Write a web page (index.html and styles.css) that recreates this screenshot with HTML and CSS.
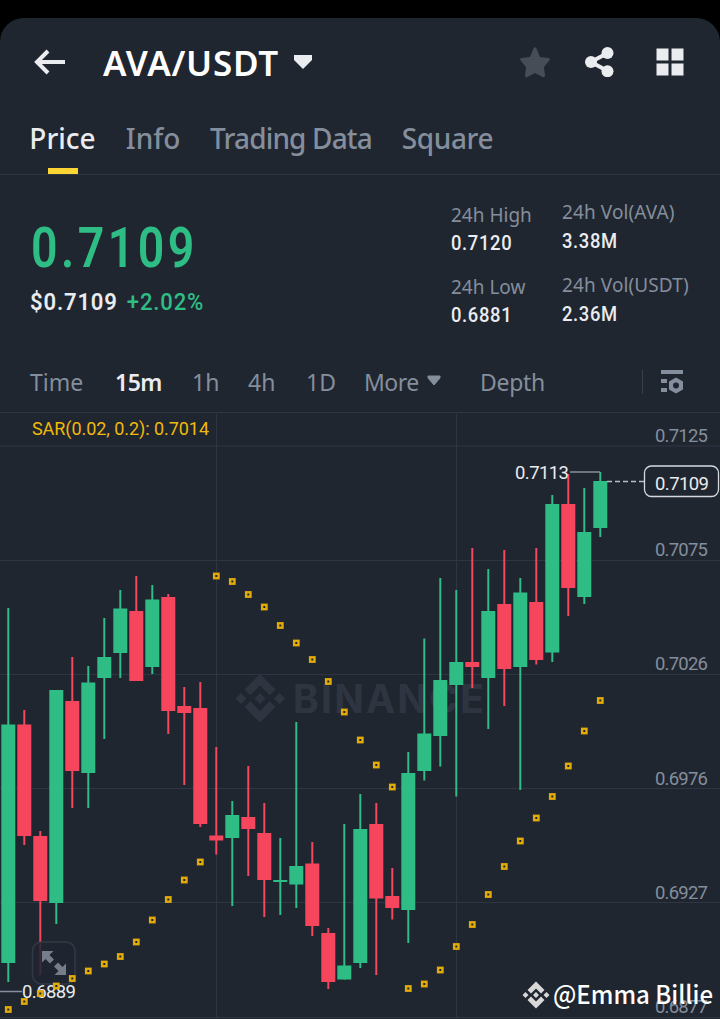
FILE: index.html
```html
<!DOCTYPE html>
<html lang="en">
<head>
<meta charset="utf-8" />
<title>AVA/USDT</title>
<meta name="viewport" content="width=device-width, initial-scale=1.0" />
<link rel="stylesheet" href="styles.css">
</head>
<body>

<div class="app">
  <header class="header">
    <svg class="back" width="32" height="26" viewBox="0 0 32 26"><path d="M14 2 3 13l11 11M3 13h28" fill="none" stroke="#eaecef" stroke-width="4"/></svg>
    <h1 class="pair">AVA/USDT</h1>
    <svg class="caret" width="18" height="14" viewBox="0 0 18 14"><path d="M0 0h18v5l-9 9-9-9z" fill="#eaecef"/></svg>
    <div class="actions">
      <svg width="30" height="31" viewBox="0 0 30 31"><path d="M13.5 1.5Q15 -.8 16.5 1.500L20 10l8.500 1q2.200.8.700 2.700L24 20l1 9q-.5 2-2.500 1L15 26l-7.500 4q-2 1-2.500-1l1-9-5.200-6.300Q-.7 11.800 1.500 11L10 10z" fill="#474d57"/></svg>
      <svg width="30" height="30" viewBox="0 0 30 30" fill="#eaecef"><path d="M6 15 22.500 6M6 15l16.500 9" stroke="#eaecef" stroke-width="4"/><circle cx="6" cy="15" r="6"/><circle cx="22.500" cy="6" r="6"/><circle cx="22.500" cy="24.200" r="6"/></svg>
      <svg width="28" height="28" viewBox="0 0 28 28" fill="#eaecef"><path d="M.5.5h12v12H.5zM15.500.5h12v12h-12zM.5 15.500h12v12H.5zM15.500 15.500h12v12h-12z"/></svg>
    </div>
  </header>

  <nav class="tabs">
    <a class="tab active">Price</a>
    <a class="tab info">Info</a>
    <a class="tab trading">Trading Data</a>
    <a class="tab square">Square</a>
  </nav>

  <section class="ticker">
    <div class="last">
      <div class="price">0.7109</div>
      <div class="fiat">$0.7109 <span class="up">+2.02%</span></div>
    </div>
    <div class="stats">
      <dl><dt>24h High</dt><dd>0.7120</dd></dl>
      <dl><dt>24h Low</dt><dd>0.6881</dd></dl>
    </div>
    <div class="stats volume">
      <dl><dt>24h Vol(AVA)</dt><dd>3.38M</dd></dl>
      <dl><dt>24h Vol(USDT)</dt><dd>2.36M</dd></dl>
    </div>
  </section>

  <nav class="intervals">
    <a class="time">Time</a>
    <a class="m15 on">15m</a>
    <a class="h1">1h</a>
    <a class="h4">4h</a>
    <a class="d1">1D</a>
    <a class="more">More <svg width="14" height="11" viewBox="0 0 14 11"><path d="M1 1h12v2L7 10 1 3z" fill="#848e9c" stroke="#848e9c"/></svg></a>
    <a class="depth">Depth</a>
    <svg class="settings" width="24" height="24" viewBox="0 0 24 24" fill="#848e9c"><path d="M1 0h22v4H1zM1 9h6v4H1zM1 18h6v4H1z"/><path fill-rule="evenodd" d="m16 7.500 7 4v8l-7 4-7-4v-8zM16 12.500a3 3 0 1 0 0 6 3 3 0 0 0 0-6z"/></svg>
  </nav>

  <svg class="chart" width="720" height="607" viewBox="0 412 720 607">
    <path class="grid" d="M0 412.500h720M0 446h720M0 560.500h720M0 674.500h720M0 788.500h720M0 902.500h720M0 1017.500h720M216.500 414v603M456.500 414v603"/>
    <g class="watermark">
      <path d="m260 674 15.500 15.500-5.800 5.800-9.700-9.700-9.700 9.700-5.800-5.800zM260 722.500 244.500 707l5.800-5.800 9.700 9.700 9.700-9.700 5.800 5.800zM241 693l5.500 5.500-5.500 5.500-5.500-5.500zM279.500 693l5.500 5.500-5.500 5.500-5.500-5.500zM260 693l5.500 5.500-5.500 5.500-5.500-5.500z"/>
      <text x="293" y="713" textLength="191">BINANCE</text>
    </g>
    <g class="axis">
      <text x="655" y="442" textLength="53">0.7125</text>
      <text x="655" y="556" textLength="53">0.7075</text>
      <text x="655" y="670" textLength="53">0.7026</text>
      <text x="655" y="785" textLength="53">0.6976</text>
      <text x="655" y="899" textLength="53">0.6927</text>
      <text x="655" y="1013" textLength="53">0.6877</text>
    </g>
    <text class="sar-label" x="32" y="435" textLength="177">SAR(0.02, 0.2): 0.7014</text>
    <g id="candles"></g>

    <path d="M570 472h30M0 991.500h22" stroke="#848e9c" stroke-width="1.700"/>
    <text class="mark" x="515" y="479" textLength="54">0.7113</text>
    <path d="M607 481.500h38" stroke="#b7bdc6" stroke-width="1.300" stroke-dasharray="5 3"/>
    <rect x="644.500" y="466" width="74" height="30.500" rx="7" fill="#202630" stroke="#d5d9df" stroke-width="1.300"/>
    <text class="mark" x="655" y="490" textLength="54">0.7109</text>

    <g class="expand">
      <rect x="32.500" y="942" width="42.500" height="42" rx="9"/>
      <path d="M42 951h11.500l-4 4 4.500 4.500-4 4-4.500-4.500-3.500 3.500zM66 975H54.500l4-4-4.500-4.500 4-4 4.500 4.500 3.500-3.500z"/>
    </g>
    <text class="mark" x="22" y="998" textLength="54">0.6889</text>
    <g id="sar"></g>

    <g class="credit">
      <path d="m536 981.500 8.500 8.500-3.500 3.500-5-5-5 5-3.500-3.500zM536 1008.500l-8.500-8.500 3.500-3.500 5 5 5-5 3.500 3.500zM525.500 992l3 3-3 3-3-3zM546.500 992l3 3-3 3-3-3zM536 992l3 3-3 3-3-3z"/>
      <text x="553" y="1004" textLength="160" lengthAdjust="spacingAndGlyphs">@Emma Billie</text>
    </g>
  </svg>
</div>

<script src="chart.js"></script>
</body>
</html>
```

FILE: styles.css
```css
body {
  margin: 0;
  background: #000;
  font-family: 'Noto Sans', sans-serif;
  color: #eaecef;
}

.app {
  margin-top: 18px;
  height: 1001px;
  background: #202630;
  border-radius: 24px 24px 0 0;
  overflow: hidden;
}

svg {
  display: block;
  flex: none;
}

.header {
  display: flex;
  align-items: center;
  height: 88px;
  padding: 0 36px 0 34px;
}

.pair {
  width: 176px;
  margin: 2px 0 0 37px;
  font-size: 35px;
  font-weight: 600;
  line-height: 48px;
  letter-spacing: 0.7px;
  white-space: nowrap;
  color: #fff;
}

.caret {
  margin-left: 15px;
}

.actions {
  display: flex;
  align-items: center;
  margin-left: auto;
}

.actions svg + svg {
  margin-left: 35px;
}

.actions svg:last-child {
  margin-left: 41px;
}

.tabs {
  display: flex;
  height: 68px;
  padding-left: 30px;
  border-bottom: 1px solid #2f3643;
  font-size: 28px;
  font-weight: 500;
  line-height: 65px;
  color: #848e9c;
  white-space: nowrap;
}

.tab {
  display: flex;
  flex-direction: column;
  justify-content: space-between;
  align-items: center;
}

.active {
  width: 65px;
  color: #eaecef;
}

.active::after {
  content: '';
  width: 30px;
  height: 6px;
  margin-top: -3px;
  background: #fcd535;
}

.info {
  width: 54px;
  margin-left: 31px;
}

.trading {
  width: 162px;
  margin-left: 30px;
  letter-spacing: -0.85px;
}

.square {
  width: 91px;
  margin-left: 30px;
  letter-spacing: -0.4px;
}

.ticker {
  display: flex;
  height: 177px;
}

.last {
  width: 421px;
  padding: 41px 0 0 30px;
  font-family: Roboto, sans-serif;
  white-space: nowrap;
}

/* narrow digits, spaced out */
.price {
  margin-left: 1px;
  font-size: 56px;
  font-weight: 600;
  line-height: 64px;
  letter-spacing: 4.2px;
  color: #2ebd85;
  transform: scaleX(0.83);
  transform-origin: 0 0;
}

.fiat {
  margin-top: 7px;
  font-size: 24px;
  font-weight: 600;
  line-height: 30px;
  letter-spacing: 0.9px;
  transform: scaleX(0.92);
  transform-origin: 0 0;
}

.up {
  margin-left: 3px;
  font-weight: 500;
  color: #2ebd85;
}

.stats {
  width: 111px;
  padding-top: 26px;
  line-height: 28px;
  white-space: nowrap;
}

.volume {
  padding-top: 23px;
}

dl {
  margin: 0 0 16px;
}

dt {
  font-size: 19px;
  color: #848e9c;
}

dd {
  margin: 0;
  font-family: Roboto, sans-serif;
  font-size: 20px;
  font-weight: 500;
  letter-spacing: 0.7px;
  transform: scaleX(0.92);
  transform-origin: 0 0;
}

.volume dt {
  letter-spacing: 0.1px;
}

.volume dd {
  line-height: 30px;
}

.volume dl {
  margin-bottom: 15px;
}

.intervals {
  display: flex;
  align-items: center;
  height: 60px;
  padding-left: 30px;
  font-size: 23px;
  color: #848e9c;
  white-space: nowrap;
}

.time { width: 85px; }
.m15 { width: 77px; }
.h1 { width: 56px; }
.h4 { width: 58px; }
.d1 { width: 58px; }

.on {
  font-weight: 600;
  letter-spacing: -0.5px;
  color: #eaecef;
}

.more {
  display: flex;
  align-items: center;
  gap: 8px;
  width: 116px;
  letter-spacing: -0.5px;
}

.more svg {
  margin-top: -3px;
}

.depth {
  width: 162px;
  letter-spacing: -0.3px;
}

.settings {
  padding-left: 17px;
  border-left: 1px solid #3a414d;
}

.chart text {
  font-family: Roboto, sans-serif;
  font-size: 18.500px;
}

.grid {
  stroke: #2f3643;
}

.chart .watermark {
  fill: #2f3540;
}

.chart .watermark text {
  font-family: Inter, sans-serif;
  font-size: 39px;
  font-weight: 700;
}

.axis {
  fill: #848e9c;
}

.chart .sar-label {
  font-size: 18px;
  fill: #f0b90b;
}

.mark {
  fill: #eaecef;
}

.bull { fill: #2ebd85; }
.bear { fill: #f6465d; }

.dot {
  fill: #202630;
  stroke: #e3ab08;
  stroke-width: 2.400;
}

.expand rect {
  fill: #202630;
  fill-opacity: 0.85;
  stroke: #333944;
  stroke-width: 1.500;
}

.expand path {
  fill: #777e8b;
}

.credit path {
  fill: #d8d8d8;
}

.chart .credit text {
  font-family: 'Noto Sans CJK SC', sans-serif;
  font-size: 25px;
  font-weight: 500;
  fill: #fff;
}
```

FILE: chart.js
```js
// wick top, body top, body bottom, wick bottom, sar; r = falling
var data = [
  ['g', 608, 724.5, 963, 982, 1009.5],
  ['r', 710, 724.5, 836, 845, 1001.5],
  ['r', 831, 836, 901, 975, 993.5],
  ['g', 690, 690, 903, 924, 986],
  ['r', 657, 701, 771, 808, 978.5],
  ['g', 666, 682.5, 773, 808, 971],
  ['g', 618, 657, 678, 739, 964],
  ['g', 590, 608.5, 653, 678, 956.5],
  ['r', 576, 611, 681, 681, 942],
  ['g', 585, 599.5, 667, 674, 920],
  ['r', 594, 597, 711, 734, 899.5],
  ['r', 687, 706, 713, 785, 880],
  ['r', 682, 708, 824, 827, 862],
  ['r', 747, 835.5, 840.5, 854.5, 576],
  ['g', 801, 815, 838, 906, 581.5],
  ['r', 766, 817, 829, 876, 594.5],
  ['r', 803, 833, 880, 917, 607],
  ['g', 838, 880, 882, 915, 625.5],
  ['g', 722, 866, 884.5, 908, 643],
  ['r', 842, 863.5, 926, 936, 659.5],
  ['r', 928, 933, 982, 989, 681.5],
  ['g', 824, 965.5, 979.5, 979.5, 712],
  ['g', 794, 829, 963, 968, 740],
  ['r', 803, 824, 898.5, 975, 765],
  ['r', 868, 896, 908, 919.5, 787],
  ['g', 752, 773, 910, 943, 988.5],
  ['g', 638.5, 733.5, 771, 780.5, 984],
  ['g', 578, 680, 736, 766.5, 970],
  ['g', 590, 662, 685, 796.5, 946.5],
  ['r', 548, 662, 667, 688, 924.5],
  ['g', 569, 611, 678, 729, 894.5],
  ['r', 550, 604, 669, 706, 866.5],
  ['g', 578, 592.5, 667, 790, 841],
  ['r', 548, 602, 660, 664.5, 818],
  ['g', 495, 504, 652.5, 662, 796.5],
  ['r', 474, 504, 588, 616, 766],
  ['g', 488, 532, 597, 604, 731],
  ['g', 472, 481, 528, 537, 700.5]
];

function rect(parent, cls, x, y, w, h) {
  var r = document.createElementNS('http://www.w3.org/2000/svg', 'rect');
  r.setAttribute('class', cls);
  r.setAttribute('x', x);
  r.setAttribute('y', y);
  r.setAttribute('width', w);
  r.setAttribute('height', h);
  parent.appendChild(r);
}

var candles = document.getElementById('candles');
var sar = document.getElementById('sar');

data.forEach(function(d, i) {
  var x = 8.3 + i * 16;
  var cls = d[0] === 'g' ? 'bull' : 'bear';
  rect(candles, cls, x - 1, d[1], 2, d[4] - d[1]);
  rect(candles, cls, x - 7, d[2], 14, d[3] - d[2]);
  rect(sar, 'dot', x - 2.2, d[5] - 2.2, 4.4, 4.4);
});
```
